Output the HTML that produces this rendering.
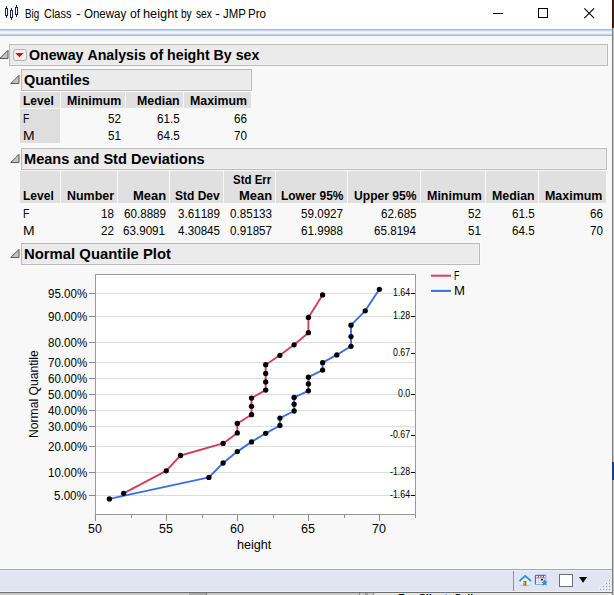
<!DOCTYPE html>
<html lang="en"><head><meta charset="utf-8"><title>Big Class - Oneway of height by sex - JMP Pro</title>
<style>
html,body{margin:0;padding:0}
body{width:614px;height:595px;overflow:hidden;position:relative;background:#f8f8f8;font-family:"Liberation Sans",sans-serif;color:#000}
.abs,.r,.t,.obox,.rtb,.titlebar,.band,.status{position:absolute}
.abs{overflow:visible}
.t{white-space:nowrap;font-kerning:none;line-height:1;transform-origin:0 0;display:block}
.b{font-weight:bold}
.titlebar{left:0;top:0;width:612px;height:29px;background:#fff}
.band{left:0;top:29px;width:612px;height:7px;background:linear-gradient(#a6bcd8 0 1px,#c8d6e8 1px 2px,#e6ecf5 2px 3px,#f5f8fc 3px 4px,#e6ecf5 4px 5px,#c8d6e8 5px 6px,#a6bcd8 6px 7px)}
.obox{height:20px;background:#ebebeb;border:1px solid #bababa;box-shadow:0 0 0 1px #fbfbfb,inset -1px -1px 0 #f0f0f0}
.rtb{width:12px;height:10px;border:1px solid #b2b2b2;border-radius:3px;background:#f1f1f1}
.status{left:0;top:568px;width:612px;height:23px;background:linear-gradient(#fdfdfd 0 1px,#9aa3cf 1px 2px,#eef0f8 2px 3px,#e1e5f2 3px 23px)}
</style></head>
<body>
<div class="titlebar">
<svg class="abs" style="left:0;top:0" width="24" height="24" viewBox="0 0 24 24" shape-rendering="crispEdges"><g fill="none" stroke="#1f2a5c" stroke-width="1"><rect x="5.5" y="8.5" width="2" height="7" fill="#fff"/><path d="M6.5 6v2M6.5 16v2"/><rect x="10.5" y="10.5" width="2" height="7" fill="#fff"/><path d="M11.5 8v2M11.5 18v2"/><rect x="15.5" y="7.5" width="2" height="7" fill="#fff"/><path d="M16.5 5v2M16.5 15v2"/></g></svg>
<span class="t" style="left:25.10px;top:7.00px;font-size:12.5px;line-height:14px;transform:scaleX(0.7822);">Big</span>
<span class="t" style="left:44.44px;top:7.00px;font-size:12.5px;line-height:14px;transform:scaleX(0.8784);">Class</span>
<span class="t" style="left:76.04px;top:7.00px;font-size:12.5px;line-height:14px;transform:scaleX(1.1796);">-</span>
<span class="t" style="left:83.65px;top:7.00px;font-size:12.5px;line-height:14px;transform:scaleX(0.9218);">Oneway</span>
<span class="t" style="left:129.59px;top:7.00px;font-size:12.5px;line-height:14px;transform:scaleX(0.9780);">of</span>
<span class="t" style="left:142.91px;top:7.00px;font-size:12.5px;line-height:14px;transform:scaleX(1.0242);">height</span>
<span class="t" style="left:181.25px;top:7.00px;font-size:12.5px;line-height:14px;transform:scaleX(0.8083);">by</span>
<span class="t" style="left:195.82px;top:7.00px;font-size:12.5px;line-height:14px;transform:scaleX(0.8171);">sex</span>
<span class="t" style="left:215.14px;top:7.00px;font-size:12.5px;line-height:14px;transform:scaleX(1.1796);">-</span>
<span class="t" style="left:223.02px;top:7.00px;font-size:12.5px;line-height:14px;transform:scaleX(0.9111);">JMP</span>
<span class="t" style="left:248.05px;top:7.00px;font-size:12.5px;line-height:14px;transform:scaleX(0.9273);">Pro</span>
<svg class="abs" style="left:480px;top:0" width="132" height="29" viewBox="480 0 132 29"><g stroke="#000" stroke-width="1" fill="none"><path d="M493 13.5h10" shape-rendering="crispEdges"/><rect x="538.5" y="8.5" width="9" height="9" shape-rendering="crispEdges"/><path d="M584.3 8.3l9.8 9.8M594.1 8.3l-9.8 9.8" stroke-width="1.1"/></g></svg>
</div>
<div class="band"></div>
<div class="obox" style="left:9px;top:44px;width:597px"></div>
<svg class="abs" style="left:-1.5px;top:48.5px" width="12" height="12" viewBox="0 0 12 12"><path d="M0.8 9.5H9V1.3Z" fill="#c4c4c4" stroke="#5a5a5a" stroke-width="1" stroke-linejoin="miter"/></svg>
<span class="t b" style="left:28.72px;top:46.00px;font-size:15px;line-height:17px;transform:scaleX(0.9465);">Oneway Analysis of height By sex</span>
<div class="rtb" style="left:13px;top:49px"></div>
<svg class="abs" style="left:13px;top:49px" width="14" height="12" viewBox="0 0 14 12"><path d="M2.3 4H10.6L6.45 8.3Z" fill="#dc0a0a"/></svg>
<div class="obox" style="left:21px;top:69px;width:229px"></div>
<svg class="abs" style="left:10.4px;top:73.5px" width="12" height="12" viewBox="0 0 12 12"><path d="M0.8 9.5H9V1.3Z" fill="#c4c4c4" stroke="#5a5a5a" stroke-width="1" stroke-linejoin="miter"/></svg>
<span class="t b" style="left:24.11px;top:71.00px;font-size:15px;line-height:17px;transform:scaleX(0.9640);">Quantiles</span>
<div class="obox" style="left:21px;top:148px;width:584px"></div>
<svg class="abs" style="left:10.4px;top:152.5px" width="12" height="12" viewBox="0 0 12 12"><path d="M0.8 9.5H9V1.3Z" fill="#c4c4c4" stroke="#5a5a5a" stroke-width="1" stroke-linejoin="miter"/></svg>
<span class="t b" style="left:23.82px;top:150.00px;font-size:15px;line-height:17px;transform:scaleX(0.9720);">Means and Std Deviations</span>
<div class="obox" style="left:21px;top:243px;width:457px"></div>
<svg class="abs" style="left:10.4px;top:247.5px" width="12" height="12" viewBox="0 0 12 12"><path d="M0.8 9.5H9V1.3Z" fill="#c4c4c4" stroke="#5a5a5a" stroke-width="1" stroke-linejoin="miter"/></svg>
<span class="t b" style="left:23.91px;top:245.00px;font-size:15px;line-height:17px;transform:scaleX(0.9907);">Normal Quantile Plot</span>
<div class="r" style="left:20px;top:92px;width:40px;height:16px;background:#e0e0e0;"></div>
<div class="r" style="left:61px;top:92px;width:64px;height:16px;background:#e0e0e0;"></div>
<div class="r" style="left:126px;top:92px;width:57px;height:16px;background:#e0e0e0;"></div>
<div class="r" style="left:184px;top:92px;width:67px;height:16px;background:#e0e0e0;"></div>
<div class="r" style="left:20px;top:109px;width:40px;height:34px;background:#dedede;"></div>
<span class="t b" style="left:23.10px;top:94.00px;font-size:12.5px;line-height:14px;transform:scaleX(0.9622);">Level</span>
<span class="t b" style="left:66.77px;top:94.00px;font-size:12.5px;line-height:14px;transform:scaleX(0.9878);">Minimum</span>
<span class="t b" style="left:136.97px;top:94.00px;font-size:12.5px;line-height:14px;transform:scaleX(0.9892);">Median</span>
<span class="t b" style="left:189.87px;top:94.00px;font-size:12.5px;line-height:14px;transform:scaleX(0.9868);">Maximum</span>
<span class="t" style="left:23.04px;top:112.00px;font-size:12.5px;line-height:14px;transform:scaleX(0.8347);">F</span>
<span class="t" style="left:108.35px;top:112.00px;font-size:12.5px;line-height:14px;transform:scaleX(0.9300);">52</span>
<span class="t" style="left:156.66px;top:112.00px;font-size:12.5px;line-height:14px;transform:scaleX(0.9300);">61.5</span>
<span class="t" style="left:234.08px;top:112.00px;font-size:12.5px;line-height:14px;transform:scaleX(0.9300);">66</span>
<span class="t" style="left:23.16px;top:129.00px;font-size:12.5px;line-height:14px;transform:scaleX(1.1122);">M</span>
<span class="t" style="left:107.64px;top:129.00px;font-size:12.5px;line-height:14px;transform:scaleX(0.9300);">51</span>
<span class="t" style="left:156.66px;top:129.00px;font-size:12.5px;line-height:14px;transform:scaleX(0.9300);">64.5</span>
<span class="t" style="left:234.02px;top:129.00px;font-size:12.5px;line-height:14px;transform:scaleX(0.9300);">70</span>
<div class="r" style="left:20px;top:171px;width:40px;height:32px;background:#e0e0e0;"></div>
<div class="r" style="left:61px;top:171px;width:56px;height:32px;background:#e0e0e0;"></div>
<div class="r" style="left:118px;top:171px;width:51px;height:32px;background:#e0e0e0;"></div>
<div class="r" style="left:170px;top:171px;width:53px;height:32px;background:#e0e0e0;"></div>
<div class="r" style="left:224px;top:171px;width:51px;height:32px;background:#e0e0e0;"></div>
<div class="r" style="left:276px;top:171px;width:71px;height:32px;background:#e0e0e0;"></div>
<div class="r" style="left:348px;top:171px;width:72px;height:32px;background:#e0e0e0;"></div>
<div class="r" style="left:421px;top:171px;width:64px;height:32px;background:#e0e0e0;"></div>
<div class="r" style="left:486px;top:171px;width:52px;height:32px;background:#e0e0e0;"></div>
<div class="r" style="left:539px;top:171px;width:67px;height:32px;background:#e0e0e0;"></div>
<span class="t b" style="left:23.10px;top:189.00px;font-size:12.5px;line-height:14px;transform:scaleX(0.9622);">Level</span>
<span class="t b" style="left:66.87px;top:189.00px;font-size:12.5px;line-height:14px;transform:scaleX(0.9956);">Number</span>
<span class="t b" style="left:132.93px;top:189.00px;font-size:12.5px;line-height:14px;transform:scaleX(1.0382);">Mean</span>
<span class="t b" style="left:174.75px;top:189.00px;font-size:12.5px;line-height:14px;transform:scaleX(0.9604);">Std Dev</span>
<span class="t b" style="left:233.07px;top:173.00px;font-size:12.5px;line-height:14px;transform:scaleX(0.9191);">Std Err</span>
<span class="t b" style="left:238.93px;top:189.00px;font-size:12.5px;line-height:14px;transform:scaleX(1.0349);">Mean</span>
<span class="t b" style="left:280.80px;top:189.00px;font-size:12.5px;line-height:14px;transform:scaleX(0.9573);">Lower 95%</span>
<span class="t b" style="left:353.67px;top:189.00px;font-size:12.5px;line-height:14px;transform:scaleX(0.9681);">Upper 95%</span>
<span class="t b" style="left:426.56px;top:189.00px;font-size:12.5px;line-height:14px;transform:scaleX(0.9991);">Minimum</span>
<span class="t b" style="left:491.97px;top:189.00px;font-size:12.5px;line-height:14px;transform:scaleX(0.9892);">Median</span>
<span class="t b" style="left:544.57px;top:189.00px;font-size:12.5px;line-height:14px;transform:scaleX(0.9957);">Maximum</span>
<span class="t" style="left:23.04px;top:207.00px;font-size:12.5px;line-height:14px;transform:scaleX(0.8347);">F</span>
<span class="t" style="left:100.77px;top:207.00px;font-size:12.5px;line-height:14px;transform:scaleX(0.9300);">18</span>
<span class="t" style="left:123.83px;top:207.00px;font-size:12.5px;line-height:14px;transform:scaleX(0.9300);">60.8889</span>
<span class="t" style="left:178.13px;top:207.00px;font-size:12.5px;line-height:14px;transform:scaleX(0.9300);">3.61189</span>
<span class="t" style="left:229.69px;top:207.00px;font-size:12.5px;line-height:14px;transform:scaleX(0.9300);">0.85133</span>
<span class="t" style="left:301.46px;top:207.00px;font-size:12.5px;line-height:14px;transform:scaleX(0.9300);">59.0927</span>
<span class="t" style="left:380.83px;top:207.00px;font-size:12.5px;line-height:14px;transform:scaleX(0.9300);">62.685</span>
<span class="t" style="left:468.45px;top:207.00px;font-size:12.5px;line-height:14px;transform:scaleX(0.9300);">52</span>
<span class="t" style="left:511.86px;top:207.00px;font-size:12.5px;line-height:14px;transform:scaleX(0.9300);">61.5</span>
<span class="t" style="left:589.88px;top:207.00px;font-size:12.5px;line-height:14px;transform:scaleX(0.9300);">66</span>
<span class="t" style="left:23.16px;top:224.00px;font-size:12.5px;line-height:14px;transform:scaleX(1.1122);">M</span>
<span class="t" style="left:100.85px;top:224.00px;font-size:12.5px;line-height:14px;transform:scaleX(0.9300);">22</span>
<span class="t" style="left:123.15px;top:224.00px;font-size:12.5px;line-height:14px;transform:scaleX(0.9300);">63.9091</span>
<span class="t" style="left:178.07px;top:224.00px;font-size:12.5px;line-height:14px;transform:scaleX(0.9300);">4.30845</span>
<span class="t" style="left:229.76px;top:224.00px;font-size:12.5px;line-height:14px;transform:scaleX(0.9300);">0.91857</span>
<span class="t" style="left:301.38px;top:224.00px;font-size:12.5px;line-height:14px;transform:scaleX(0.9300);">61.9988</span>
<span class="t" style="left:374.22px;top:224.00px;font-size:12.5px;line-height:14px;transform:scaleX(0.9300);">65.8194</span>
<span class="t" style="left:467.74px;top:224.00px;font-size:12.5px;line-height:14px;transform:scaleX(0.9300);">51</span>
<span class="t" style="left:511.86px;top:224.00px;font-size:12.5px;line-height:14px;transform:scaleX(0.9300);">64.5</span>
<span class="t" style="left:589.82px;top:224.00px;font-size:12.5px;line-height:14px;transform:scaleX(0.9300);">70</span>
<svg class="abs" style="left:0;top:266px" width="500" height="300" viewBox="0 266 500 300"><rect x="95.5" y="274.5" width="320" height="240" fill="#fff" stroke="none"/><g stroke="#dcdcdc" stroke-width="1" shape-rendering="crispEdges"><path d="M96 293.5 H415"/><path d="M96 316.5 H415"/><path d="M96 342.5 H415"/><path d="M96 362.5 H415"/><path d="M96 378.5 H415"/><path d="M96 394.5 H415"/><path d="M96 410.5 H415"/><path d="M96 426.5 H415"/><path d="M96 446.5 H415"/><path d="M96 472.5 H415"/><path d="M96 495.5 H415"/></g><g stroke="#8c8c8c" stroke-width="1" shape-rendering="crispEdges"><path d="M89 293.5 H95"/><path d="M89 316.5 H95"/><path d="M89 342.5 H95"/><path d="M89 362.5 H95"/><path d="M89 378.5 H95"/><path d="M89 394.5 H95"/><path d="M89 410.5 H95"/><path d="M89 426.5 H95"/><path d="M89 446.5 H95"/><path d="M89 472.5 H95"/><path d="M89 495.5 H95"/></g><rect x="95.5" y="274.5" width="320" height="240" fill="none" stroke="#9a9a9a" stroke-width="1" shape-rendering="crispEdges"/><g stroke="#8c8c8c" stroke-width="1" shape-rendering="crispEdges"><path d="M95.5 515 V521"/><path d="M131.5 515 V518"/><path d="M166.5 515 V521"/><path d="M202.5 515 V518"/><path d="M237.5 515 V521"/><path d="M273.5 515 V518"/><path d="M308.5 515 V521"/><path d="M344.5 515 V518"/><path d="M379.5 515 V521"/><path d="M415.5 515 V518"/></g><g stroke="#000" stroke-width="1" shape-rendering="crispEdges"><path d="M411 293.5 H415"/><path d="M411 316.5 H415"/><path d="M411 353.5 H415"/><path d="M411 394.5 H415"/><path d="M411 435.5 H415"/><path d="M411 472.5 H415"/><path d="M411 495.5 H415"/></g><polyline fill="none" stroke="#d0405a" stroke-width="1.9" stroke-linejoin="round" points="123.6,493.3 166.2,470.8 180.5,455.5 223.1,443.4 237.3,432.9 237.3,423.5 251.5,414.7 251.5,406.3 251.5,398.1 265.7,390.1 265.7,381.9 265.7,373.5 265.7,364.7 279.9,355.3 294.1,344.8 308.4,332.7 308.4,317.4 322.6,294.9"/><polyline fill="none" stroke="#3b6fe0" stroke-width="1.9" stroke-linejoin="round" points="109.4,498.9 208.9,477.4 223.1,463.0 237.3,451.6 251.5,441.9 265.7,433.3 279.9,425.5 279.9,418.1 294.1,411.0 294.1,404.2 294.1,397.4 308.4,390.8 308.4,384.0 308.4,377.2 322.6,370.1 322.6,362.7 336.8,354.9 351.0,346.3 351.0,336.6 351.0,325.2 365.2,310.8 379.4,289.3"/><g fill="#000"><circle cx="123.6" cy="493.3" r="2.65"/><circle cx="166.2" cy="470.8" r="2.65"/><circle cx="180.5" cy="455.5" r="2.65"/><circle cx="223.1" cy="443.4" r="2.65"/><circle cx="237.3" cy="432.9" r="2.65"/><circle cx="237.3" cy="423.5" r="2.65"/><circle cx="251.5" cy="414.7" r="2.65"/><circle cx="251.5" cy="406.3" r="2.65"/><circle cx="251.5" cy="398.1" r="2.65"/><circle cx="265.7" cy="390.1" r="2.65"/><circle cx="265.7" cy="381.9" r="2.65"/><circle cx="265.7" cy="373.5" r="2.65"/><circle cx="265.7" cy="364.7" r="2.65"/><circle cx="279.9" cy="355.3" r="2.65"/><circle cx="294.1" cy="344.8" r="2.65"/><circle cx="308.4" cy="332.7" r="2.65"/><circle cx="308.4" cy="317.4" r="2.65"/><circle cx="322.6" cy="294.9" r="2.65"/><circle cx="109.4" cy="498.9" r="2.65"/><circle cx="208.9" cy="477.4" r="2.65"/><circle cx="223.1" cy="463.0" r="2.65"/><circle cx="237.3" cy="451.6" r="2.65"/><circle cx="251.5" cy="441.9" r="2.65"/><circle cx="265.7" cy="433.3" r="2.65"/><circle cx="279.9" cy="425.5" r="2.65"/><circle cx="279.9" cy="418.1" r="2.65"/><circle cx="294.1" cy="411.0" r="2.65"/><circle cx="294.1" cy="404.2" r="2.65"/><circle cx="294.1" cy="397.4" r="2.65"/><circle cx="308.4" cy="390.8" r="2.65"/><circle cx="308.4" cy="384.0" r="2.65"/><circle cx="308.4" cy="377.2" r="2.65"/><circle cx="322.6" cy="370.1" r="2.65"/><circle cx="322.6" cy="362.7" r="2.65"/><circle cx="336.8" cy="354.9" r="2.65"/><circle cx="351.0" cy="346.3" r="2.65"/><circle cx="351.0" cy="336.6" r="2.65"/><circle cx="351.0" cy="325.2" r="2.65"/><circle cx="365.2" cy="310.8" r="2.65"/><circle cx="379.4" cy="289.3" r="2.65"/></g><path d="M431 275.7H451" stroke="#d0405a" stroke-width="2"/><path d="M431 290.9H451" stroke="#3b6fe0" stroke-width="2"/></svg>
<span class="t" style="left:47.70px;top:287.00px;font-size:12.5px;line-height:14px;transform:scaleX(0.9250);">95.00%</span>
<span class="t" style="left:47.70px;top:310.00px;font-size:12.5px;line-height:14px;transform:scaleX(0.9250);">90.00%</span>
<span class="t" style="left:47.70px;top:336.00px;font-size:12.5px;line-height:14px;transform:scaleX(0.9250);">80.00%</span>
<span class="t" style="left:47.70px;top:356.00px;font-size:12.5px;line-height:14px;transform:scaleX(0.9250);">70.00%</span>
<span class="t" style="left:47.70px;top:372.00px;font-size:12.5px;line-height:14px;transform:scaleX(0.9250);">60.00%</span>
<span class="t" style="left:47.70px;top:388.00px;font-size:12.5px;line-height:14px;transform:scaleX(0.9250);">50.00%</span>
<span class="t" style="left:47.70px;top:404.00px;font-size:12.5px;line-height:14px;transform:scaleX(0.9250);">40.00%</span>
<span class="t" style="left:47.70px;top:420.00px;font-size:12.5px;line-height:14px;transform:scaleX(0.9250);">30.00%</span>
<span class="t" style="left:47.70px;top:440.00px;font-size:12.5px;line-height:14px;transform:scaleX(0.9250);">20.00%</span>
<span class="t" style="left:47.70px;top:466.00px;font-size:12.5px;line-height:14px;transform:scaleX(0.9250);">10.00%</span>
<span class="t" style="left:54.13px;top:489.00px;font-size:12.5px;line-height:14px;transform:scaleX(0.9250);">5.00%</span>
<span class="t" style="left:88.40px;top:522.00px;font-size:12.5px;line-height:14px;transform:scaleX(0.9911);">50</span>
<span class="t" style="left:159.40px;top:522.00px;font-size:12.5px;line-height:14px;transform:scaleX(0.9939);">55</span>
<span class="t" style="left:230.26px;top:522.00px;font-size:12.5px;line-height:14px;transform:scaleX(1.0015);">60</span>
<span class="t" style="left:301.26px;top:522.00px;font-size:12.5px;line-height:14px;transform:scaleX(1.0044);">65</span>
<span class="t" style="left:372.26px;top:522.00px;font-size:12.5px;line-height:14px;transform:scaleX(1.0020);">70</span>
<span class="t" style="left:236.83px;top:538.00px;font-size:12.5px;line-height:14px;transform:scaleX(1.0091);">height</span>
<span class="t" style="left:454.48px;top:269.00px;font-size:12.5px;line-height:14px;transform:scaleX(0.7038);">F</span>
<span class="t" style="left:454.12px;top:284.00px;font-size:12.5px;line-height:14px;transform:scaleX(1.0524);">M</span>
<span class="t" style="left:393.13px;top:287.00px;font-size:10px;line-height:11px;transform:scaleX(0.8800);">1.64</span>
<span class="t" style="left:393.26px;top:310.00px;font-size:10px;line-height:11px;transform:scaleX(0.8800);">1.28</span>
<span class="t" style="left:393.32px;top:347.00px;font-size:10px;line-height:11px;transform:scaleX(0.8800);">0.67</span>
<span class="t" style="left:398.11px;top:388.00px;font-size:10px;line-height:11px;transform:scaleX(0.8800);">0.0</span>
<span class="t" style="left:390.38px;top:429.00px;font-size:10px;line-height:11px;transform:scaleX(0.8800);">-0.67</span>
<span class="t" style="left:390.32px;top:466.00px;font-size:10px;line-height:11px;transform:scaleX(0.8800);">-1.28</span>
<span class="t" style="left:390.20px;top:489.00px;font-size:10px;line-height:11px;transform:scaleX(0.8800);">-1.64</span>
<span class="t" style="left:0;top:0;font-size:12.5px;line-height:14px;transform-origin:0 0;transform:translate(38.00px,437.00px) rotate(-90deg) scaleX(0.9715) translate(-1.03px,-11.00px)">Normal Quantile</span>
<div class="status"></div>
<div class="r" style="left:513px;top:571px;width:1px;height:20px;background:#8c91ad;"></div>
<svg class="abs" style="left:518px;top:573px" width="31" height="15" viewBox="518 573 31 15"><rect x="520.6" y="579.5" width="9.2" height="6" fill="#d5e9f8"/><rect x="521.6" y="579.5" width="7.2" height="5.6" fill="#f2f8fd"/><path d="M520.6 585.3H529.8" stroke="#86c8ee" stroke-width="0.9"/><path d="M521 580.6L525.2 576.8L529.4 580.6Z" fill="#eaf4fb"/><path d="M519.5 581L525.2 575.9L530.9 581" fill="none" stroke="#2b92d4" stroke-width="1.8" stroke-linejoin="miter"/><rect x="523.4" y="581" width="3" height="4.6" fill="#a5700f"/><rect x="524" y="581.8" width="1" height="2.6" fill="#d9b35a"/><rect x="535.4" y="575.3" width="10.4" height="9.2" fill="#f3f7fd"/><path d="M535.4 584.5V575.3H545.8" fill="none" stroke="#2f5fb2" stroke-width="1"/><path d="M545.8 575.8V584.5H535.9" fill="none" stroke="#7fa3dc" stroke-width="0.9"/><path d="M536 577.9H545.4" stroke="#ee6262" stroke-width="1.1"/><path d="M536 580.3H545.4M536 582.5H545.4" stroke="#b4cdf0" stroke-width="0.8"/><path d="M538.5 578.6V584M541 578.6V584M543.5 578.6V584" stroke="#c3d5f0" stroke-width="0.6"/><path d="M538.5 575.6V577.3M541 575.6V577.3M543.5 575.6V577.3" stroke="#24408c" stroke-width="0.9"/><rect x="541.1" y="578.9" width="1.9" height="1.5" fill="#111"/><path d="M544.5 579.3L545.5 581.5L547.9 581.6L546.1 583.1L546.8 585.6L544.6 584.3L542.2 585.9L543.1 583.2L541.4 581.9L543.6 581.5Z" fill="#2b86d9"/></svg>
<div class="r" style="left:559px;top:574px;width:12px;height:11px;background:#fff;border:1px solid #6e6e6e"></div>
<svg class="abs" style="left:578px;top:576px" width="10" height="8" viewBox="0 0 10 8"><path d="M1 1H9.1L5.05 6.7Z" fill="#000"/></svg>
<svg class="abs" style="left:598px;top:578px" width="13" height="13" viewBox="0 0 13 13" shape-rendering="crispEdges"><rect x="10" y="1" width="1" height="1" fill="#fff"/><rect x="11" y="2" width="1" height="1" fill="#8e9dc6"/><rect x="10" y="4" width="1" height="1" fill="#fff"/><rect x="11" y="5" width="1" height="1" fill="#8e9dc6"/><rect x="7" y="4" width="1" height="1" fill="#fff"/><rect x="8" y="5" width="1" height="1" fill="#8e9dc6"/><rect x="10" y="7" width="1" height="1" fill="#fff"/><rect x="11" y="8" width="1" height="1" fill="#8e9dc6"/><rect x="7" y="7" width="1" height="1" fill="#fff"/><rect x="8" y="8" width="1" height="1" fill="#8e9dc6"/><rect x="4" y="7" width="1" height="1" fill="#fff"/><rect x="5" y="8" width="1" height="1" fill="#8e9dc6"/><rect x="10" y="10" width="1" height="1" fill="#fff"/><rect x="11" y="11" width="1" height="1" fill="#8e9dc6"/><rect x="7" y="10" width="1" height="1" fill="#fff"/><rect x="8" y="11" width="1" height="1" fill="#8e9dc6"/><rect x="4" y="10" width="1" height="1" fill="#fff"/><rect x="5" y="11" width="1" height="1" fill="#8e9dc6"/><rect x="1" y="10" width="1" height="1" fill="#fff"/><rect x="2" y="11" width="1" height="1" fill="#8e9dc6"/></svg>
<div class="r" style="left:611px;top:571px;width:1px;height:21px;background:#ebeff8;"></div>
<div class="r" style="left:0px;top:591px;width:612px;height:1px;background:#eef1f8;"></div>
<div class="r" style="left:0px;top:592px;width:613px;height:1px;background:#707070;"></div>
<div class="r" style="left:0px;top:593px;width:612px;height:2px;background:#c9c9c9;"></div>
<div class="r" style="left:189px;top:593px;width:17px;height:2px;background:#a8a8a8;"></div>
<div class="r" style="left:206px;top:593px;width:1px;height:2px;background:#707070;"></div>
<div class="r" style="left:374px;top:593px;width:238px;height:2px;background:#e6e6e6;"></div>
<div class="r" style="left:359px;top:593px;width:1px;height:2px;background:#8a8a8a;"></div>
<div class="r" style="left:365px;top:593px;width:3px;height:2px;background:#a0a0a0;"></div>
<div class="r" style="left:373px;top:593px;width:1px;height:2px;background:#8a8a8a;"></div>
<div class="r" style="left:396px;top:594px;width:90px;height:1px;overflow:hidden;background:transparent"><span class="t b" style="left:2px;top:-2px;font-size:11px;line-height:13px;transform:scaleX(0.97)">For Client&nbsp; Cell</span></div>
<div class="r" style="left:612px;top:0px;width:1px;height:28px;background:#3c1409;"></div>
<div class="r" style="left:613px;top:0px;width:1px;height:28px;background:#5e1605;"></div>
<div class="r" style="left:612px;top:28px;width:1px;height:567px;background:#7d7d7d;"></div>
<div class="r" style="left:613px;top:28px;width:1px;height:567px;background:#c4c4c4;"></div>
<div class="r" style="left:612px;top:462px;width:2px;height:18px;background:#173f7c;"></div>
</body></html>
